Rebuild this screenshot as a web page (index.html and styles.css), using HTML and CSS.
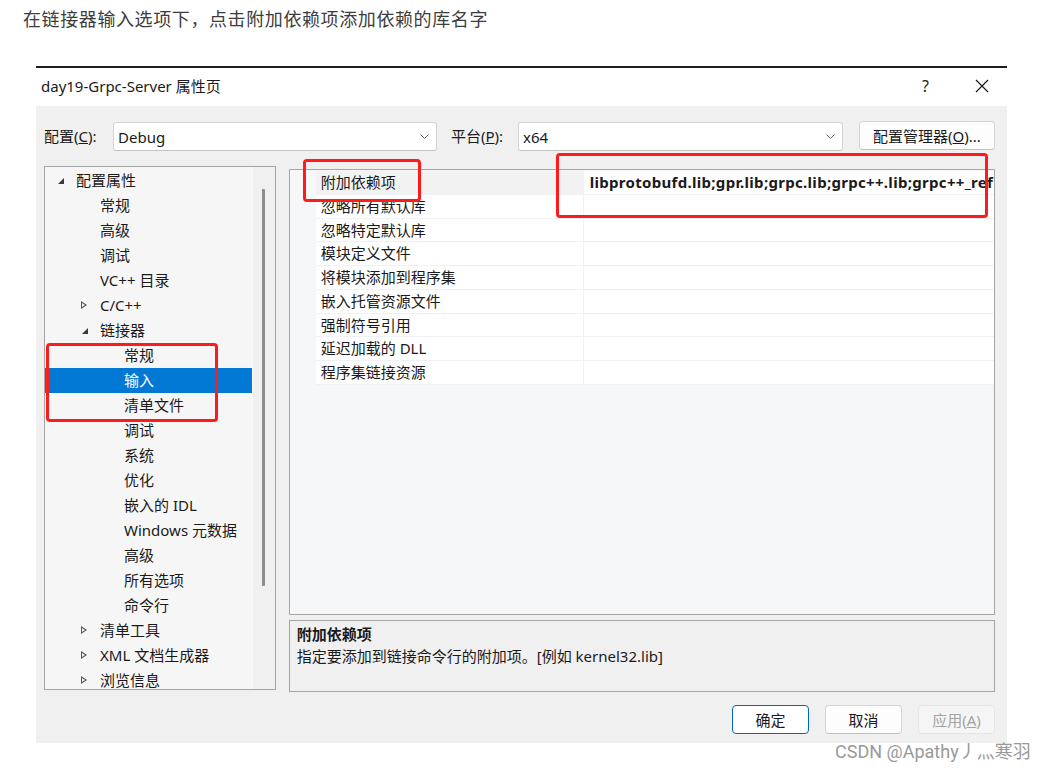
FILE: index.html
```html
<!DOCTYPE html>
<html>
<head>
    <meta charset="utf-8">
    <title>day19-Grpc-Server 属性页</title>
    <link rel="stylesheet" href="styles.css">
</head>
<body>
    <p class="intro">在链接器输入选项下，点击附加依赖项添加依赖的库名字</p>

    <div class="dialog">
        <div class="titlebar">
            <span class="title">day19-Grpc-Server 属性页</span>
            <span class="help">?</span>
            <svg class="close" width="14" height="14" viewBox="0 0 14 14">
                <path d="M1 1 L13 13 M13 1 L1 13" stroke="#1a1a1a" stroke-width="1.2" fill="none"/>
            </svg>
        </div>

        <div class="dialog-body">
            <div class="config-row">
                <label class="lbl lbl-config">配置(<u>C</u>):</label>
                <div class="select sel-config">
                    <span>Debug</span>
                    <svg width="9" height="5" viewBox="0 0 9 5"><path d="M0.5 0.5 L4.5 4.5 L8.5 0.5" stroke="#606060" fill="none"/></svg>
                </div>
                <label class="lbl lbl-platform">平台(<u>P</u>):</label>
                <div class="select sel-platform">
                    <span>x64</span>
                    <svg width="9" height="5" viewBox="0 0 9 5"><path d="M0.5 0.5 L4.5 4.5 L8.5 0.5" stroke="#606060" fill="none"/></svg>
                </div>
                <button class="btn btn-manager">配置管理器(<u>O</u>)...</button>
            </div>

            <div class="main">
                <div class="tree">
                    <ul class="tree-list">
                        <li class="lv0"><span class="arrow open"></span>配置属性</li>
                        <li class="lv1"><span class="arrow"></span>常规</li>
                        <li class="lv1"><span class="arrow"></span>高级</li>
                        <li class="lv1"><span class="arrow"></span>调试</li>
                        <li class="lv1"><span class="arrow"></span>VC++ 目录</li>
                        <li class="lv1"><span class="arrow closed"></span>C/C++</li>
                        <li class="lv1"><span class="arrow open"></span>链接器</li>
                        <li class="lv2"><span class="arrow"></span>常规</li>
                        <li class="lv2 selected"><span class="arrow"></span>输入</li>
                        <li class="lv2"><span class="arrow"></span>清单文件</li>
                        <li class="lv2"><span class="arrow"></span>调试</li>
                        <li class="lv2"><span class="arrow"></span>系统</li>
                        <li class="lv2"><span class="arrow"></span>优化</li>
                        <li class="lv2"><span class="arrow"></span>嵌入的 IDL</li>
                        <li class="lv2"><span class="arrow"></span>Windows 元数据</li>
                        <li class="lv2"><span class="arrow"></span>高级</li>
                        <li class="lv2"><span class="arrow"></span>所有选项</li>
                        <li class="lv2"><span class="arrow"></span>命令行</li>
                        <li class="lv1"><span class="arrow closed"></span>清单工具</li>
                        <li class="lv1"><span class="arrow closed"></span>XML 文档生成器</li>
                        <li class="lv1"><span class="arrow closed"></span>浏览信息</li>
                    </ul>
                    <div class="scroll"><div class="thumb"></div></div>
                </div>

                <div class="right">
                    <div class="grid">
                        <div class="row current">
                            <div class="name">附加依赖项</div>
                            <div class="value">libprotobufd.lib;gpr.lib;grpc.lib;grpc++.lib;grpc++_ref</div>
                        </div>
                        <div class="row"><div class="name">忽略所有默认库</div><div class="value"></div></div>
                        <div class="row"><div class="name">忽略特定默认库</div><div class="value"></div></div>
                        <div class="row"><div class="name">模块定义文件</div><div class="value"></div></div>
                        <div class="row"><div class="name">将模块添加到程序集</div><div class="value"></div></div>
                        <div class="row"><div class="name">嵌入托管资源文件</div><div class="value"></div></div>
                        <div class="row"><div class="name">强制符号引用</div><div class="value"></div></div>
                        <div class="row"><div class="name">延迟加载的 DLL</div><div class="value"></div></div>
                        <div class="row"><div class="name">程序集链接资源</div><div class="value"></div></div>
                    </div>
                    <div class="desc">
                        <div class="desc-title">附加依赖项</div>
                        <div class="desc-text">指定要添加到链接命令行的附加项。[例如 kernel32.lib]</div>
                    </div>
                </div>
            </div>

            <div class="buttons">
                <button class="btn btn-ok">确定</button>
                <button class="btn btn-cancel">取消</button>
                <button class="btn btn-apply">应用(<u>A</u>)</button>
            </div>
        </div>
    </div>

    <!-- red annotation frames -->
    <div class="mark mark-tree"></div>
    <div class="mark mark-name"></div>
    <div class="mark mark-value"></div>

    <div class="watermark">CSDN @Apathy丿灬寒羽</div>
</body>
</html>
```

FILE: styles.css
```css
body {
    margin: 0;
    background: #fff;
    font-family: "Noto Sans", "Noto Sans CJK SC", sans-serif;
    color: #1a1a1a;
    position: relative;
    width: 1057px;
    height: 769px;
    overflow: hidden;
}
.intro {
    margin: 0;
    padding: 6px 0 0 23px;
    line-height: 24px;
    font-size: 18px;
    letter-spacing: 0.6px;
    color: #3d3d3d;
    font-family: "Noto Sans CJK SC", sans-serif;
}
.dialog {
    margin: 36px 0 0 36px;
    width: 971px;
    border-top: 2px solid #1f1f1f;
}
.titlebar {
    height: 38px;
    box-sizing: border-box;
    padding: 0 0 3px 5px;
    background: #fff;
    display: flex;
    align-items: center;
    font-size: 15px;
}
.title {
    flex: 1;
}
.help {
    width: 20px;
    font-size: 16px;
    margin-right: 33px;
}
.close {
    margin-right: 18px;
}
.dialog-body {
    background: #f0f0f0;
    height: 637px;
    box-sizing: border-box;
    padding: 16px 12px 0 8px;
    font-size: 15px;
}
.config-row {
    display: flex;
    align-items: flex-start;
    height: 29px;
}
.lbl {
    line-height: 28px;
    white-space: nowrap;
}
.lbl-config {
    width: 69px;
}
.lbl-platform {
    width: 67px;
    margin-left: 14px;
}
.select {
    height: 29px;
    box-sizing: border-box;
    background: #fff;
    border: 1px solid #d4d4d4;
    border-bottom-color: #c4c4c4;
    border-radius: 3px;
    display: flex;
    align-items: center;
    justify-content: space-between;
    padding: 0 7px 0 4px;
}
.sel-config {
    width: 324px;
}
.sel-platform {
    width: 325px;
}
.btn {
    font-family: "Noto Sans", "Noto Sans CJK SC", sans-serif;
    font-size: 15px;
    color: #1a1a1a;
    height: 29px;
    box-sizing: border-box;
    border-radius: 4px;
    background: #fdfdfd;
    border: 1px solid #d6d6d6;
    border-bottom-color: #c2c2c2;
    padding: 0;
}
.btn-manager {
    width: 136px;
    margin-left: 16px;
    margin-top: -1px;
}
.main {
    display: flex;
    margin-top: 15px;
    height: 526px;
}
.tree {
    width: 232px;
    height: 524px;
    box-sizing: border-box;
    border: 1px solid #a5a5a5;
    background: #f6f6f6;
    display: flex;
}
.tree-list {
    list-style: none;
    margin: 0;
    padding: 1px 0 0 0;
    width: 207px;
}
.tree-list li {
    height: 25px;
    line-height: 25px;
    white-space: nowrap;
    display: flex;
    align-items: center;
}
.tree-list .lv0 { padding-left: 7px; }
.tree-list .lv1 { padding-left: 31px; }
.tree-list .lv2 { padding-left: 55px; }
.tree-list li.selected {
    background: #0078d4;
    color: #fff;
}
.arrow {
    width: 24px;
    height: 25px;
    flex: none;
    position: relative;
}
.arrow.open::before {
    content: "";
    position: absolute;
    left: 6px;
    top: 10px;
    border-style: solid;
    border-width: 0 0 6px 6px;
    border-color: transparent transparent #3a3a3a transparent;
}
.arrow.closed::before {
    content: "";
    position: absolute;
    left: 5px;
    top: 8px;
    width: 0;
    height: 0;
    border-style: solid;
    border-width: 4.5px 0 4.5px 6px;
    border-color: transparent transparent transparent #555;
}
.arrow.closed::after {
    content: "";
    position: absolute;
    left: 6px;
    top: 10px;
    border-style: solid;
    border-width: 2.5px 0 2.5px 3.5px;
    border-color: transparent transparent transparent #f6f6f6;
}
.scroll {
    flex: 1;
    background: #f0f0f0;
    border-left: 1px solid #fafafa;
    padding-top: 22px;
}
.thumb {
    width: 3px;
    height: 397px;
    margin-left: 9px;
    background: #8c8c8c;
    border-radius: 1px;
}
.right {
    width: 707px;
    margin-left: 13px;
}
.grid {
    margin-top: 3px;
    height: 446px;
    box-sizing: border-box;
    border: 1px solid #a5a5a5;
    background: #f6f7f9;
    padding: 1px 0 0 26px;
}
.row {
    display: flex;
    height: 23.75px;
    line-height: 23px;
}
.name {
    width: 268px;
    box-sizing: border-box;
    padding-left: 5px;
    background: #fff;
    border-right: 1px solid #eef1f5;
    border-bottom: 1px solid #eef1f5;
}
.value {
    flex: 1;
    min-width: 0;
    padding-left: 6px;
    background: #fff;
    border-bottom: 1px solid #eef1f5;
    white-space: nowrap;
    overflow: hidden;
    font-weight: bold;
    font-size: 15px;
    letter-spacing: 0.3px;
}
.row.current .name {
    background: #f2f2f2;
}
.desc {
    margin-top: 5px;
    height: 72px;
    box-sizing: border-box;
    border: 1px solid #a5a5a5;
    background: #f0f0f0;
    padding: 2px 0 0 7px;
}
.desc-title {
    font-weight: bold;
    line-height: 22px;
}
.desc-text {
    line-height: 23px;
}
.buttons {
    display: flex;
    justify-content: flex-end;
    gap: 16px;
    margin-top: 13px;
}
.buttons .btn {
    width: 77px;
}
.btn-ok {
    border: 1px solid #0067c0;
    background: #fff;
}
.btn-apply {
    background: #f5f5f5;
    border-color: #e5e5e5;
    color: #a3a3a3;
}
.mark {
    position: absolute;
    border: 3px solid #ff1b1b;
    border-radius: 4px;
    box-sizing: border-box;
}
.mark-tree {
    left: 46px;
    top: 343px;
    width: 172px;
    height: 79px;
}
.mark-name {
    left: 303px;
    top: 159px;
    width: 118px;
    height: 43px;
}
.mark-value {
    left: 556px;
    top: 153px;
    width: 432px;
    height: 65px;
}
.watermark {
    position: absolute;
    left: 835px;
    top: 737px;
    font-family: Roboto, "Noto Sans CJK SC", sans-serif;
    font-size: 18px;
    color: #999;
    white-space: nowrap;
}
```
